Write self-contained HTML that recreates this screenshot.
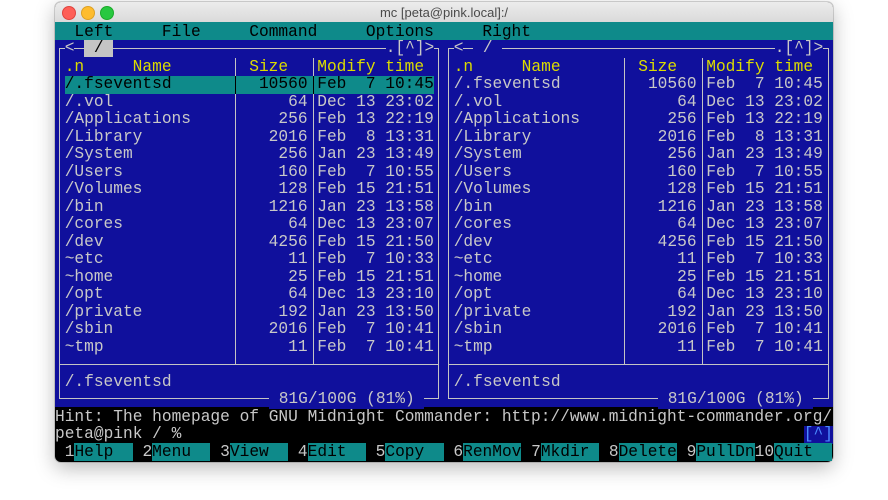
<!DOCTYPE html>
<html><head><meta charset="utf-8"><style>
html,body{margin:0;padding:0;width:888px;height:500px;background:#fff;overflow:hidden}
.win{position:absolute;left:55px;top:2px;width:778px;height:460px;border-radius:6px;overflow:hidden;box-shadow:0 6px 20px rgba(0,0,0,.28),0 0 0 1px rgba(0,0,0,.15);background:#000}
.tb{position:absolute;left:0;top:0;width:778px;height:20px;background:linear-gradient(#ececec,#dadada);border-bottom:1px solid #b8b8b8}
.tl{position:absolute;top:4px;width:12px;height:12px;border-radius:50%}
.ttl{position:absolute;left:0;right:0;top:3px;text-align:center;font:13px "Liberation Sans",sans-serif;color:#4a4a4a}
.a{position:absolute}
.t{position:absolute;white-space:pre;font:16.2px/17.5px "Liberation Mono",monospace;color:#c8c8c8;margin-top:1.5px}
.y{color:#dcdc00}
.h{position:absolute;height:1px;background:#c4c4c4}
.v{position:absolute;width:1px;background:#c4c4c4}
.bb{background:#10109c}
</style></head><body>
<div class="win">
<div class="tb">
<div class="tl" style="left:7px;background:#fe5f57;border:0.5px solid #e0443e"></div>
<div class="tl" style="left:26px;background:#febc2e;border:0.5px solid #dea123"></div>
<div class="tl" style="left:45px;background:#28c840;border:0.5px solid #1aab29"></div>
<div class="ttl">mc [peta@pink.local]:/</div>
</div>
</div>
<!-- terminal -->
<div class="a" style="left:55px;top:22px;width:778px;height:17.5px;background:#0e8a8a"></div>
<div class="a" style="left:55px;top:39.5px;width:778px;height:367.5px;background:#10109c"></div>
<div class="a" style="left:55px;top:407px;width:778px;height:53px;background:#000;border-radius:0 0 6px 6px"></div>
<div class="t" style="left:55px;top:22px;color:#000">  Left     File     Command     Options     Right</div>

<!-- borders -->
<div class="h" style="left:60px;top:48px;width:379px"></div>
<div class="h" style="left:449px;top:48px;width:379px"></div>
<div class="h" style="left:60px;top:398px;width:379px"></div>
<div class="h" style="left:449px;top:398px;width:379px"></div>
<div class="h" style="left:60px;top:364px;width:379px"></div>
<div class="h" style="left:449px;top:364px;width:379px"></div>
<div class="v" style="left:59px;top:48px;height:351px"></div>
<div class="v" style="left:438px;top:48px;height:351px"></div>
<div class="v" style="left:448px;top:48px;height:351px"></div>
<div class="v" style="left:828px;top:48px;height:351px"></div>
<!-- cursor row -->
<div class="a" style="left:64.7px;top:76px;width:369.6px;height:17.5px;background:#0e8a8a"></div>
<div class="v" style="left:235px;top:58px;height:306px"></div>
<div class="v" style="left:313px;top:58px;height:306px"></div>
<div class="v" style="left:624px;top:58px;height:306px"></div>
<div class="v" style="left:702px;top:58px;height:306px"></div>
<div class="a" style="left:235px;top:76px;width:1px;height:17.5px;background:#000"></div>
<div class="a" style="left:313px;top:76px;width:1px;height:17.5px;background:#000"></div>

<!-- top border labels -->
<div class="t bb" style="left:64.7px;top:38px">&lt;</div>
<div class="t" style="left:84.2px;top:38px;background:#c4c4c4;color:#000"> / </div>
<div class="t bb" style="left:385.7px;top:38px">.[^]&gt;</div>
<div class="t bb" style="left:453.7px;top:38px">&lt;</div>
<div class="t bb" style="left:473.2px;top:38px"> / </div>
<div class="t bb" style="left:774.7px;top:38px">.[^]&gt;</div>
<!-- bottom labels -->
<div class="t bb" style="left:269px;top:389.5px"> 81G/100G (81%) </div>
<div class="t bb" style="left:658px;top:389.5px"> 81G/100G (81%) </div>

<!-- left panel -->
<div class="t y" style="left:64.7px;top:57px">.n     Name        Size   Modify time</div>
<div class="t" style="left:64.7px;top:74.5px;color:#000">/.fseventsd         10560 Feb  7 10:45</div>
<div class="t" style="left:64.7px;top:92px">/.vol                  64 Dec 13 23:02
/Applications         256 Feb 13 22:19
/Library             2016 Feb  8 13:31
/System               256 Jan 23 13:49
/Users                160 Feb  7 10:55
/Volumes              128 Feb 15 21:51
/bin                 1216 Jan 23 13:58
/cores                 64 Dec 13 23:07
/dev                 4256 Feb 15 21:50
~etc                   11 Feb  7 10:33
~home                  25 Feb 15 21:51
/opt                   64 Dec 13 23:10
/private              192 Jan 23 13:50
/sbin                2016 Feb  7 10:41
~tmp                   11 Feb  7 10:41</div>
<div class="t" style="left:64.7px;top:372px">/.fseventsd</div>

<!-- right panel -->
<div class="t y" style="left:453.7px;top:57px">.n     Name        Size   Modify time</div>
<div class="t" style="left:453.7px;top:74.5px">/.fseventsd         10560 Feb  7 10:45
/.vol                  64 Dec 13 23:02
/Applications         256 Feb 13 22:19
/Library             2016 Feb  8 13:31
/System               256 Jan 23 13:49
/Users                160 Feb  7 10:55
/Volumes              128 Feb 15 21:51
/bin                 1216 Jan 23 13:58
/cores                 64 Dec 13 23:07
/dev                 4256 Feb 15 21:50
~etc                   11 Feb  7 10:33
~home                  25 Feb 15 21:51
/opt                   64 Dec 13 23:10
/private              192 Jan 23 13:50
/sbin                2016 Feb  7 10:41
~tmp                   11 Feb  7 10:41</div>
<div class="t" style="left:453.7px;top:372px">/.fseventsd</div>

<!-- bottom -->
<div class="t" style="left:55px;top:407px">Hint: The homepage of GNU Midnight Commander: http://www.midnight-commander.org/</div>
<div class="t" style="left:55px;top:424.5px">peta@pink / %</div>
<div class="t bb" style="left:803.8px;top:424.5px;color:#4a8aff">[^]</div>
<div class="t" style="left:55px;top:442px"> 1<span style="background:#0e8a8a;color:#000">Help  </span> 2<span style="background:#0e8a8a;color:#000">Menu  </span> 3<span style="background:#0e8a8a;color:#000">View  </span> 4<span style="background:#0e8a8a;color:#000">Edit  </span> 5<span style="background:#0e8a8a;color:#000">Copy  </span> 6<span style="background:#0e8a8a;color:#000">RenMov</span> 7<span style="background:#0e8a8a;color:#000">Mkdir </span> 8<span style="background:#0e8a8a;color:#000">Delete</span> 9<span style="background:#0e8a8a;color:#000">PullDn</span>10<span style="background:#0e8a8a;color:#000">Quit  </span></div>
</body></html>
